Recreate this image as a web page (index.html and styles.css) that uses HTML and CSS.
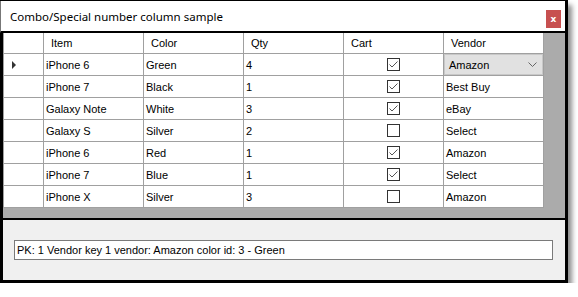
FILE: index.html
```html
<!DOCTYPE html>
<html lang="en">
<head>
    <meta charset="UTF-8">
    <title>Combo/Special number column sample</title>
    <link rel="stylesheet" href="styles.css">
</head>
<body>
    <div class="window">
        <div class="titlebar">
            <span class="title">Combo/Special number column sample</span>
            <span class="close">x</span>
        </div>
        <div class="client">
            <div class="grid">
                <div class="rows">
                    <div class="cell corner"></div>
                    <div class="cell head">Item</div>
                    <div class="cell head">Color</div>
                    <div class="cell head">Qty</div>
                    <div class="cell head">Cart</div>
                    <div class="cell head">Vendor</div>

                    <div class="cell rowhead"><span class="arrow"></span></div>
                    <div class="cell">iPhone 6</div>
                    <div class="cell">Green</div>
                    <div class="cell">4</div>
                    <div class="cell check"><span class="box"><svg width="11" height="11" viewBox="0 0 11 11"><polyline points="1.5,5.5 4,8 9.5,2.5" fill="none" stroke="#555" stroke-width="1"/></svg></span></div>
                    <div class="cell combo-cell">
                        <div class="combo">Amazon
                            <svg class="chev" width="9" height="5" viewBox="0 0 9 5"><polyline points="0.5,0.5 4.5,4.5 8.5,0.5" fill="none" stroke="#666" stroke-width="1"/></svg>
                        </div>
                    </div>

                    <div class="cell rowhead"></div>
                    <div class="cell">iPhone 7</div>
                    <div class="cell">Black</div>
                    <div class="cell">1</div>
                    <div class="cell check"><span class="box"><svg width="11" height="11" viewBox="0 0 11 11"><polyline points="1.5,5.5 4,8 9.5,2.5" fill="none" stroke="#555" stroke-width="1"/></svg></span></div>
                    <div class="cell">Best Buy</div>

                    <div class="cell rowhead"></div>
                    <div class="cell">Galaxy Note</div>
                    <div class="cell">White</div>
                    <div class="cell">3</div>
                    <div class="cell check"><span class="box"><svg width="11" height="11" viewBox="0 0 11 11"><polyline points="1.5,5.5 4,8 9.5,2.5" fill="none" stroke="#555" stroke-width="1"/></svg></span></div>
                    <div class="cell">eBay</div>

                    <div class="cell rowhead"></div>
                    <div class="cell">Galaxy S</div>
                    <div class="cell">Silver</div>
                    <div class="cell">2</div>
                    <div class="cell check"><span class="box"></span></div>
                    <div class="cell">Select</div>

                    <div class="cell rowhead"></div>
                    <div class="cell">iPhone 6</div>
                    <div class="cell">Red</div>
                    <div class="cell">1</div>
                    <div class="cell check"><span class="box"><svg width="11" height="11" viewBox="0 0 11 11"><polyline points="1.5,5.5 4,8 9.5,2.5" fill="none" stroke="#555" stroke-width="1"/></svg></span></div>
                    <div class="cell">Amazon</div>

                    <div class="cell rowhead"></div>
                    <div class="cell">iPhone 7</div>
                    <div class="cell">Blue</div>
                    <div class="cell">1</div>
                    <div class="cell check"><span class="box"><svg width="11" height="11" viewBox="0 0 11 11"><polyline points="1.5,5.5 4,8 9.5,2.5" fill="none" stroke="#555" stroke-width="1"/></svg></span></div>
                    <div class="cell">Select</div>

                    <div class="cell rowhead"></div>
                    <div class="cell">iPhone X</div>
                    <div class="cell">Silver</div>
                    <div class="cell">3</div>
                    <div class="cell check"><span class="box"></span></div>
                    <div class="cell">Amazon</div>
                </div>
            </div>
            <div class="panel">
                <div class="status">PK: 1 Vendor key 1 vendor: Amazon color id: 3 - Green</div>
            </div>
        </div>
    </div>
</body>
</html>
```

FILE: styles.css
```css
body {
    margin: 0;
    background-color: #fff;
    font-family: "Liberation Sans", Arial, sans-serif;
    font-size: 11px;
    color: #000;
}

.window {
    width: 568px;
    border-top: 1px solid #000;
    border-right: 3px solid #000;
    box-sizing: border-box;
    box-shadow: 4px 5px 5px rgba(0, 0, 0, 0.45);
}

.titlebar {
    height: 30px;
    background-color: #fff;
    border-bottom: 2px solid #000;
    border-left: 1px solid #777;
    display: flex;
    align-items: center;
    justify-content: space-between;
    padding: 0 4px 0 9px;
}

.title {
    font-family: "Noto Sans", sans-serif;
    font-size: 11.5px;
}

.close {
    width: 15px;
    height: 18px;
    margin-top: 6px;
    background-color: #c75050;
    color: #fff;
    font-family: "DejaVu Sans", sans-serif;
    font-weight: bold;
    font-size: 9px;
    display: flex;
    align-items: center;
    justify-content: center;
}

.client {
    border-left: 3px solid #000;
    border-bottom: 3px solid #000;
    background-color: #f0f0f0;
}

.grid {
    height: 185px;
    background-color: #ababab; /* app workspace */
    border-bottom: 2px solid #000;
}

.rows {
    display: grid;
    grid-template-columns: 41px repeat(5, 100px);
    grid-template-rows: 21px;
    grid-auto-rows: 22px;
}

.cell {
    background-color: #fff;
    border-right: 1px solid #a0a0a0;
    border-bottom: 1px solid #a0a0a0;
    display: flex;
    align-items: center;
    padding-left: 2px;
    box-sizing: border-box;
    white-space: nowrap;
}

.corner,
.rowhead {
    border-left: 1px solid #a0a0a0;
}

.head {
    padding-left: 7px;
}

.arrow {
    margin-left: 6px;
    border-top: 4px solid transparent;
    border-bottom: 4px solid transparent;
    border-left: 4px solid #333;
}

.check {
    justify-content: center;
    padding-left: 0;
}

.box {
    width: 13px;
    height: 13px;
    border: 1px solid #333;
    box-sizing: border-box;
    display: flex;
    align-items: center;
    justify-content: center;
    background-color: #fff;
}

.combo-cell {
    padding: 0;
}

.combo {
    flex: 1;
    align-self: stretch;
    display: flex;
    align-items: center;
    justify-content: space-between;
    padding: 0 5px 0 4px;
    background-color: #e1e1e1;
    border: 1px solid #c8c8c8;
}

.panel {
    height: 60px;
    padding: 20px 12px 0 11px;
    box-sizing: border-box;
}

.status {
    height: 20px;
    background-color: #fff;
    border: 1px solid #7a7a7a;
    box-sizing: border-box;
    padding-left: 2px;
    display: flex;
    align-items: center;
}
```
